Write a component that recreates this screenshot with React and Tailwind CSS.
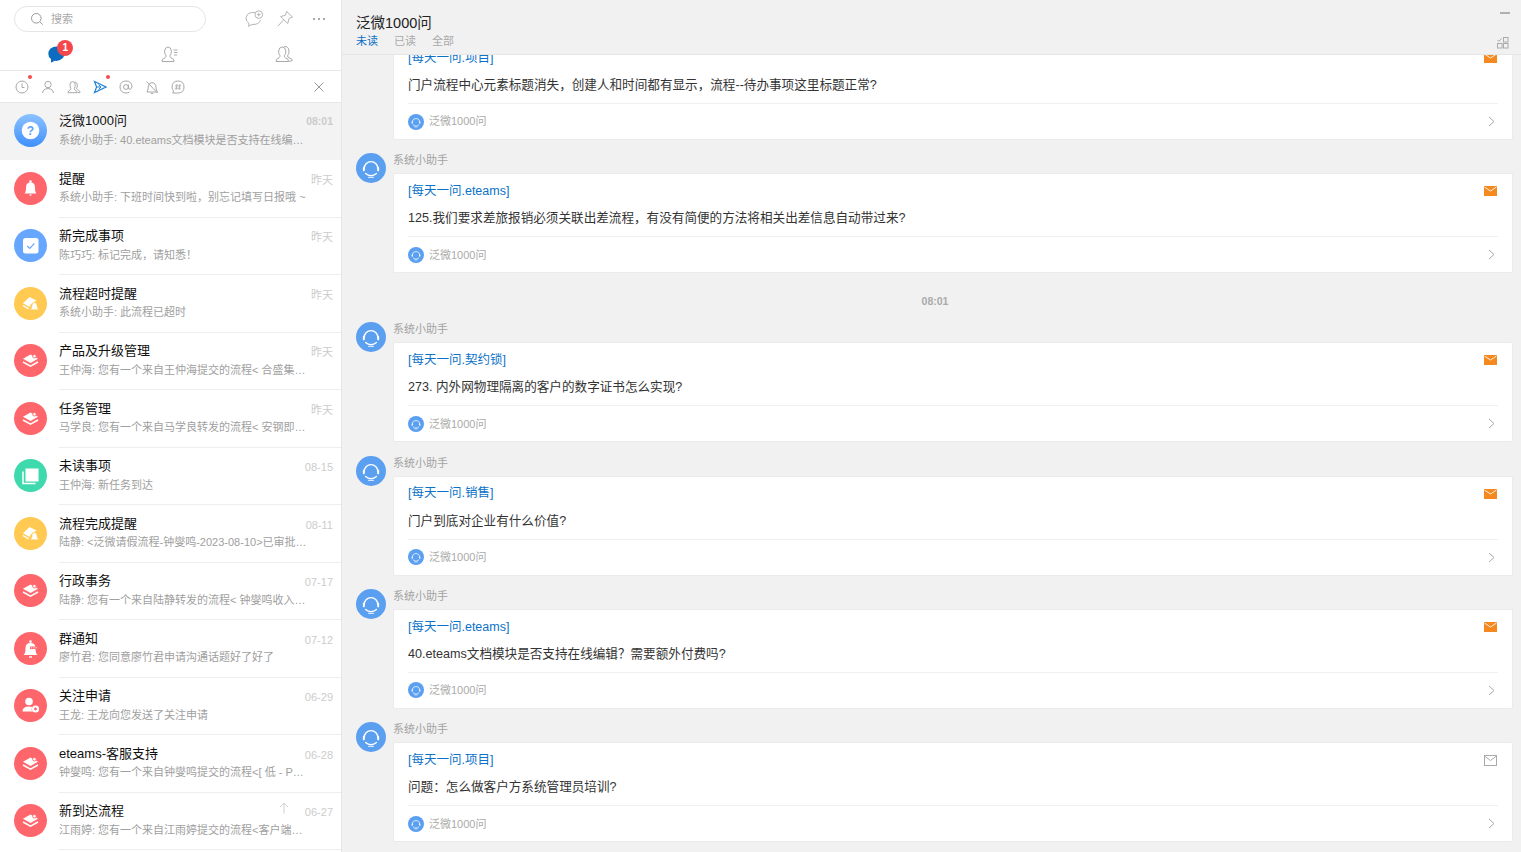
import React from "react";

const font = { fontFamily: '"Liberation Sans","Noto Sans CJK SC",sans-serif' };

const Layers = () => (
  <svg width="33" height="33" viewBox="0 0 33 33">
    <path d="M16.5 10.5 L24 14.7 L16.5 18.9 L9 14.7 Z" fill="#fff" />
    <circle cx="20.4" cy="12.2" r="1.8" fill="#fff" stroke="currentColor" strokeWidth="0.9" />
    <path d="M9 18 L16.5 22.2 L24 18" fill="none" stroke="#fff" strokeWidth="1.5" />
  </svg>
);
const FlowBell = () => (
  <svg width="33" height="33" viewBox="0 0 33 33">
    <path d="M15.5 10 L22.5 13.5 L18.5 15.8 Q16.5 17 15.5 20 L9 16.2 Z" fill="#fff" />
    <path d="M9 18.5 L14.6 21.8" stroke="#fff" strokeWidth="1.4" fill="none" />
    <path d="M16 22.8 Q18 22 18 18.5 Q18 15.6 20.5 15.6 Q23 15.6 23 18.5 Q23 22 25 22.8 Z" fill="#fff" stroke="#ffc952" strokeWidth="0.6" />
  </svg>
);
const Bell = () => (
  <svg width="33" height="33" viewBox="0 0 33 33">
    <circle cx="16.5" cy="9.6" r="1.3" fill="#fff" />
    <path d="M10.5 21.5 Q12 20.5 12 15.5 Q12 10.5 16.5 10.5 Q21 10.5 21 15.5 Q21 20.5 22.5 21.5 Z" fill="#fff" />
    <path d="M15 22.6 h3 L16.5 24.2 Z" fill="#fff" />
  </svg>
);
const GroupBell = () => (
  <svg width="33" height="33" viewBox="0 0 33 33">
    <circle cx="16.5" cy="9.6" r="1.3" fill="#fff" />
    <path d="M9.5 23 Q11.5 21.5 11.5 16 Q11.5 11 16.5 11 Q21.5 11 21.5 16 Q21.5 21.5 23.5 23 Z" fill="#fff" />
    <path d="M15 25 h3" stroke="#fff" strokeWidth="1.4" />
    <rect x="16" y="14.5" width="7.5" height="2.6" fill="#ff666b" />
    <path d="M16.8 15.8 h1.2 M19.2 15.8 h1.2 M21.6 15.8 h1.2" stroke="#fff" strokeWidth="0.9" />
  </svg>
);
const Follow = () => (
  <svg width="33" height="33" viewBox="0 0 33 33">
    <circle cx="15" cy="12.5" r="3.8" fill="#fff" />
    <path d="M8.5 22.5 Q8.5 17.5 15 17.5 Q17 17.5 18 18 Q17 21 18.5 22.5 Z" fill="#fff" />
    <circle cx="21.5" cy="20" r="3.6" fill="#fff" />
    <circle cx="21.5" cy="20" r="1.4" fill="#ff666b" />
  </svg>
);
const Check = () => (
  <svg width="33" height="33" viewBox="0 0 33 33">
    <rect x="9" y="9" width="15.5" height="15.5" rx="2.5" fill="#fff" />
    <path d="M13.2 17 L15.8 19.4 L20.4 14.4" fill="none" stroke="#66a6ff" strokeWidth="1.2" />
  </svg>
);
const Help = () => (
  <svg width="33" height="33" viewBox="0 0 33 33">
    <circle cx="16.5" cy="16.5" r="8.8" fill="#fff" />
    <text x="16.5" y="20.8" textAnchor="middle" fontSize="12" fontWeight="700" fill="#5aa2f8" fontFamily="Liberation Sans">?</text>
  </svg>
);
const Squares = () => (
  <svg width="33" height="33" viewBox="0 0 33 33">
    <rect x="11.5" y="9.5" width="13" height="13" fill="#fff" />
    <path d="M9 12.5 V24.5 H21.5" fill="none" stroke="#fff" strokeWidth="1.5" />
  </svg>
);

const rows = [
  { t: "泛微1000问", p: "系统小助手: 40.eteams文档模块是否支持在线编辑？需要额外付费吗？", d: "08:01", c: "bg-gradient-to-b from-[#8cc2ff] to-[#3f8ffb]", I: Help, active: true },
  { t: "提醒", p: "系统小助手: 下班时间快到啦，别忘记填写日报哦 ~", d: "昨天", c: "bg-[#ff666b]", I: Bell },
  { t: "新完成事项", p: "陈巧巧: 标记完成，请知悉！", d: "昨天", c: "bg-[#66a6ff]", I: Check },
  { t: "流程超时提醒", p: "系统小助手: 此流程已超时", d: "昨天", c: "bg-[#ffc952]", I: FlowBell },
  { t: "产品及升级管理", p: "王仲海: 您有一个来自王仲海提交的流程< 合盛集团项目升级申请流程", d: "昨天", c: "bg-[#ff666b] text-[#ff666b]", I: Layers },
  { t: "任务管理", p: "马学良: 您有一个来自马学良转发的流程< 安钢即时通讯项目任务", d: "昨天", c: "bg-[#ff666b] text-[#ff666b]", I: Layers },
  { t: "未读事项", p: "王仲海: 新任务到达", d: "08-15", c: "bg-[#3fd9ae]", I: Squares },
  { t: "流程完成提醒", p: "陆静: <泛微请假流程-钟燮鸣-2023-08-10>已审批通过，请知悉", d: "08-11", c: "bg-[#ffc952]", I: FlowBell },
  { t: "行政事务", p: "陆静: 您有一个来自陆静转发的流程< 钟燮鸣收入证明申请流程", d: "07-17", c: "bg-[#ff666b] text-[#ff666b]", I: Layers },
  { t: "群通知", p: "廖竹君: 您同意廖竹君申请沟通话题好了好了", d: "07-12", c: "bg-[#ff666b]", I: GroupBell },
  { t: "关注申请", p: "王龙: 王龙向您发送了关注申请", d: "06-29", c: "bg-[#ff666b]", I: Follow },
  { t: "eteams-客服支持", p: "钟燮鸣: 您有一个来自钟燮鸣提交的流程<[ 低 - P3 ] 客服支持问题", d: "06-28", c: "bg-[#ff666b] text-[#ff666b]", I: Layers },
  { t: "新到达流程", p: "江雨婷: 您有一个来自江雨婷提交的流程<客户端问题反馈流程申请", d: "06-27", c: "bg-[#ff666b] text-[#ff666b]", I: Layers },
];

const msgs = [
  { title: "[每天一问.项目]", body: "门户流程中心元素标题消失，创建人和时间都有显示，流程--待办事项这里标题正常?" },
  { title: "[每天一问.eteams]", body: "125.我们要求差旅报销必须关联出差流程，有没有简便的方法将相关出差信息自动带过来?" },
  { title: "[每天一问.契约锁]", body: "273. 内外网物理隔离的客户的数字证书怎么实现?", time: "08:01" },
  { title: "[每天一问.销售]", body: "门户到底对企业有什么价值?" },
  { title: "[每天一问.eteams]", body: "40.eteams文档模块是否支持在线编辑？需要额外付费吗?" },
  { title: "[每天一问.项目]", body: "问题：怎么做客户方系统管理员培训?", read: true },
];

const Headset = ({ s }) => (
  <svg width={s} height={s} viewBox="0 0 30 30" fill="none" stroke="#fff" strokeLinecap="round">
    <path d="M8 16 A7 7.4 0 0 1 22 16" strokeWidth="1.4" />
    <path d="M7.8 14.8 V17.4 M22.2 14.8 V17.4" strokeWidth="1.9" />
    <path d="M9.6 20.4 Q12 22.6 15 22.6 Q18 22.6 20.4 20.4" strokeWidth="1.3" />
    <path d="M12.6 24.2 H17.4" strokeWidth="1.1" />
  </svg>
);

const Mail = ({ read }) =>
  read ? (
    <svg width="13" height="11" viewBox="0 0 13 11">
      <rect x="0.5" y="0.5" width="12" height="10" fill="none" stroke="#aaa" />
      <path d="M0.5 1 L6.5 5.5 L12.5 1" fill="none" stroke="#aaa" />
    </svg>
  ) : (
    <svg width="13" height="10" viewBox="0 0 13 10">
      <rect width="13" height="10" fill="#f5891f" />
      <path d="M0.5 1 L6.5 5 L12.5 1" fill="none" stroke="#fff" strokeWidth="0.9" />
    </svg>
  );

const Chevron = () => (
  <svg width="7" height="11" viewBox="0 0 7 11">
    <path d="M1 1 L6 5.5 L1 10" fill="none" stroke="#aaa" strokeWidth="1" />
  </svg>
);

const Msg = ({ m }) => (
  <>
    {m.time && (
      <div className="h-[36px] flex items-center justify-center pl-[7px] pb-[1px] text-[10.5px] font-bold text-[#aaa] mt-[-0.33px]">{m.time}</div>
    )}
    <div className="flex pl-[14px] pr-[8px] gap-[7px] mb-[11.33px]">
      <div className="w-[30px] h-[30px] rounded-full bg-[#5b9ff0] shrink-0 mt-[2px]">
        <Headset s={30} />
      </div>
      <div className="flex-1 min-w-0">
        <div className="h-[19px] leading-[19px] text-[11px] text-[#a3a3a3] mb-[3px]">系统小助手</div>
        <div className="h-[100px] bg-white border border-[#ebebeb] rounded-[2px] pl-[14px] pr-[14px]">
          <div className="flex items-center justify-between h-[34px] pr-[1px]">
            <span className="text-[12.5px] text-[#0b72c9]">{m.title}</span>
            <Mail read={m.read} />
          </div>
          <div className="h-[29px] leading-[20px] text-[12.6px] text-[#333] border-b border-[#efefef]">{m.body}</div>
          <div className="h-[35px] flex items-center">
            <div className="w-[16px] h-[16px] rounded-full bg-[#5b9ff0] mr-[5px]">
              <Headset s={16} />
            </div>
            <span className="text-[11px] text-[#aaa]">泛微1000问</span>
            <span className="ml-auto mr-[3px] flex"><Chevron /></span>
          </div>
        </div>
      </div>
    </div>
  </>
);

const G = "#a8a8a8";
const Dot = () => <span className="absolute top-[-5px] right-[-3px] w-[4px] h-[4px] rounded-full bg-[#f25050]" />;

const Filter = ({ children, dot }) => (
  <span className="relative w-[14px] h-[14px] flex">
    {children}
    {dot && <Dot />}
  </span>
);
const S14 = ({ children, stroke = G }) => (
  <svg width="14" height="14" viewBox="0 0 14 14" fill="none" stroke={stroke} strokeWidth="1">{children}</svg>
);

export default function App() {
  return (
    <div style={font} className="flex w-[1521px] h-[852px] overflow-hidden bg-[#f1f1f1]">
      <aside className="relative w-[342px] shrink-0 bg-white border-r border-[#e6e6e6] flex flex-col overflow-hidden">
        <div className="h-[38px] flex items-start pt-[6px] pl-[14px] shrink-0">
          <div className="w-[192px] h-[26px] border border-[#e5e5e5] rounded-[13px] flex items-center pl-[15px]">
            <svg width="14" height="14" viewBox="0 0 14 14" fill="none" stroke="#999" strokeWidth="1">
              <circle cx="6.3" cy="6.3" r="4.8" />
              <path d="M10 10 L12.6 12.6" />
            </svg>
            <span className="ml-[7px] text-[11px] text-[#aaa]">搜索</span>
          </div>
          <div className="flex items-center ml-[38px] h-[26px]">
            <svg width="20" height="20" viewBox="0 0 20 20" fill="none" stroke="#b5b5b5" strokeWidth="1">
              <path d="M11 3.6 Q3.5 2.6 2 8.5 Q1.5 12.5 5 14.4 L4.6 17.4 L8 15.4 Q14.5 16 16.6 11.2" />
              <circle cx="14.8" cy="5.6" r="3.8" />
              <path d="M14.8 3.9 v3.4 M13.1 5.6 h3.4" />
            </svg>
            <svg className="ml-[11px]" width="20" height="20" viewBox="0 0 20 20" fill="none" stroke="#b5b5b5" strokeWidth="1">
              <path d="M11.5 2.5 L17.5 8 L14 9.5 L12.8 14.5 L5.6 7.6 L10.5 6.2 Z" />
              <path d="M8.5 11 L3 17" />
            </svg>
            <span className="ml-[18px] flex gap-[3px]">
              <i className="w-[2px] h-[2px] bg-[#aaa]" />
              <i className="w-[2px] h-[2px] bg-[#aaa]" />
              <i className="w-[2px] h-[2px] bg-[#aaa]" />
            </span>
          </div>
        </div>

        <div className="h-[33px] shrink-0 border-b border-[#e8e8e8] grid grid-cols-3 items-start">
          <div className="flex justify-center">
            <span className="relative w-[17px] h-[17px] mt-[8px]">
              <svg width="17" height="17" viewBox="0 0 17 17">
                <ellipse cx="8.3" cy="7.7" rx="8" ry="7.2" fill="#0b6cc0" />
                <path d="M3 12 L3 16.8 L8 14 Z" fill="#0b6cc0" />
              </svg>
              <span className="absolute left-[9px] top-[-6px] w-[16px] h-[16px] rounded-full bg-[#f4474c] text-white text-[10px] font-bold leading-[16px] text-center">1</span>
            </span>
          </div>
          <div className="flex justify-center">
            <svg className="mt-[7px]" width="18" height="18" viewBox="0 0 18 18" fill="none" stroke="#aaa" strokeWidth="1">
              <path d="M1 16.5 H13 Q13.4 14 10 12.8 Q8.7 12 9 10.6 Q10.6 9 10.4 6 Q10 2 7 2 Q4 2 3.6 6 Q3.4 9 5 10.6 Q5.3 12 4 12.8 Q0.7 14 1 16.5 Z" />
              <path d="M12.5 5 h4 M13 7.5 h3.5 M13 10 h3" />
            </svg>
          </div>
          <div className="flex justify-center">
            <svg className="mt-[7px]" width="19" height="18" viewBox="0 0 19 18" fill="none" stroke="#aaa" strokeWidth="1">
              <path d="M1 16.5 H13.5 Q14 14 10.5 12.8 Q9 12 9.4 10.6 Q11 9 10.8 6 Q10.4 2 7.2 2 Q4 2 3.6 6 Q3.4 9 5 10.6 Q5.3 12 4 12.8 Q0.6 14 1 16.5 Z" />
              <path d="M9 1.5 Q13.6 1 14 6 Q14 9 12.6 10.6 Q12.4 12 14 12.8 Q17.8 14 17.4 15.5 L14 16.5" />
            </svg>
          </div>
        </div>

        <div className="h-[31.5px] shrink-0 border-b border-[#e8e8e8] flex items-center pl-[15px] pr-[17px] pt-[1px] gap-[12px]">
          <Filter dot>
            <S14>
              <circle cx="7" cy="7" r="6" />
              <path d="M7 3.5 V7.5 H9.5" />
            </S14>
          </Filter>
          <Filter>
            <S14>
              <circle cx="7" cy="4.5" r="3.2" />
              <path d="M1.6 13 Q2 8.6 7 8.6 Q12 8.6 12.4 13" />
            </S14>
          </Filter>
          <Filter>
            <S14>
              <path d="M1 12.7 H10 Q10.3 11 8 10 Q7 9.3 7.4 8.4 Q8.4 7 8.2 4.6 Q8 1.6 5.6 1.6 Q3.2 1.6 3 4.6 Q2.8 7 3.9 8.4 Q4.1 9.3 3 10 Q0.8 11 1 12.7 Z" />
              <path d="M8 2 Q10.6 2.6 10.4 5.4 Q10.2 7.6 9.4 8.6 Q10.4 9.6 11.4 10.2 Q13.2 11 13 12.7 H10.4" />
            </S14>
          </Filter>
          <Filter dot>
            <S14 stroke="#1f82d6">
              <path d="M1.5 1.5 L13 7 L1.5 12.5 L3.6 7 Z" strokeWidth="1.2" />
              <path d="M3.6 7 H8 M5.5 4.5 L8 7 L5.5 9.5" strokeWidth="1" />
            </S14>
          </Filter>
          <Filter>
            <S14>
              <circle cx="7" cy="7" r="2.4" />
              <path d="M9.4 4.6 V8 Q9.6 9.6 11.2 9.2 Q13 8.4 13 6.6 Q12.6 1 7 1 Q1 1.2 1 7 Q1.2 12.8 7 13 Q9 13 10.4 12.2" />
            </S14>
          </Filter>
          <Filter>
            <S14>
              <path d="M2 12 L12.5 12 Q11 10.5 11 7.5 Q11 3 7 2.6 Q4 2.6 3.4 6 Q3.2 10 2 12 Z" />
              <path d="M1.5 1.5 L12.5 13 M5.8 13.4 h2.6" />
            </S14>
          </Filter>
          <Filter>
            <S14>
              <path d="M7 1 Q13 1 13 7 Q13 13 7 13 L1.6 13 L2.6 10.8 Q1 9.4 1 7 Q1 1 7 1 Z" />
              <path d="M6 4 L5 10 M9 4 L8 10 M4 5.8 H10 M3.8 8.2 H9.8" strokeWidth="0.8" />
            </S14>
          </Filter>
          <svg className="ml-auto" width="10" height="10" viewBox="0 0 10 10" stroke="#999" strokeWidth="1">
            <path d="M0.5 0.5 L9.5 9.5 M9.5 0.5 L0.5 9.5" />
          </svg>
        </div>

        <div className="flex-1 min-h-0 overflow-hidden">
          {rows.map((r) => (
            <div key={r.t} className={`h-[57.5px] flex ${r.active ? "bg-[#f3f3f3]" : "bg-white"}`}>
              <div className={`ml-[14px] self-center mb-[1px] w-[33px] h-[33px] rounded-full shrink-0 ${r.c}`}>
                <r.I />
              </div>
              <div className={`ml-[12px] flex-1 min-w-0 pr-[8px] pt-[8.5px] ${r.active ? "" : "border-b border-[#eeeeee]"}`}>
                <div className="flex items-center justify-between h-[20px]">
                  <span className="text-[13px] text-[#111]">{r.t}</span>
                  {r.active ? (
                    <span className="text-[10.5px] font-bold text-[#cccccc] mt-[1px]">{r.d}</span>
                  ) : (
                    <span className="text-[11px] text-[#cccccc] mt-[3px]">{r.d}</span>
                  )}
                </div>
                <div className="h-[18px] leading-[18px] mt-[-0.5px] text-[11px] text-[#a0a0a0] truncate pr-[25px]">{r.p}</div>
              </div>
            </div>
          ))}
        </div>

        <div className="absolute left-[270px] top-[794px] w-[27px] h-[27px] rounded-full bg-white/80 flex items-center justify-center">
          <svg width="10" height="12" viewBox="0 0 10 12" fill="none" stroke="#d0d0d0" strokeWidth="1">
            <path d="M5 11.5 V1 M1 5 L5 1 L9 5" />
          </svg>
        </div>
      </aside>

      <main className="flex-1 min-w-0 flex flex-col overflow-hidden">
        <header className="relative h-[55px] shrink-0 z-10 bg-[#f1f1f1] border-b border-[#e6e6e6] pl-[14px] pt-[13px]">
          <div className="text-[14.5px] leading-[20px] text-[#222]">泛微1000问</div>
          <div className="flex gap-[16px] text-[11px] leading-[16px] text-[#aaa]">
            <span className="text-[#0f6fc6]">未读</span>
            <span>已读</span>
            <span>全部</span>
          </div>
          <i className="absolute right-[11px] top-[12px] w-[10px] h-[1.5px] bg-[#b0b0b0]" />
          <svg className="absolute right-[12px] top-[37px]" width="12" height="12" viewBox="0 0 12 12" fill="none" stroke="#aaa" strokeWidth="1">
            <rect x="0.5" y="6.5" width="4.5" height="4.5" />
            <rect x="6.5" y="6.5" width="4.5" height="4.5" />
            <rect x="6.5" y="0.5" width="4.5" height="4.5" />
            <path d="M0.5 3 L2 4.5 L4.5 1.5" />
          </svg>
        </header>
        <div className="flex-1 min-h-0 overflow-hidden">
          <div className="-mt-[37px]">
            {msgs.map((m, i) => (
              <Msg key={i} m={m} />
            ))}
          </div>
        </div>
      </main>
    </div>
  );
}
